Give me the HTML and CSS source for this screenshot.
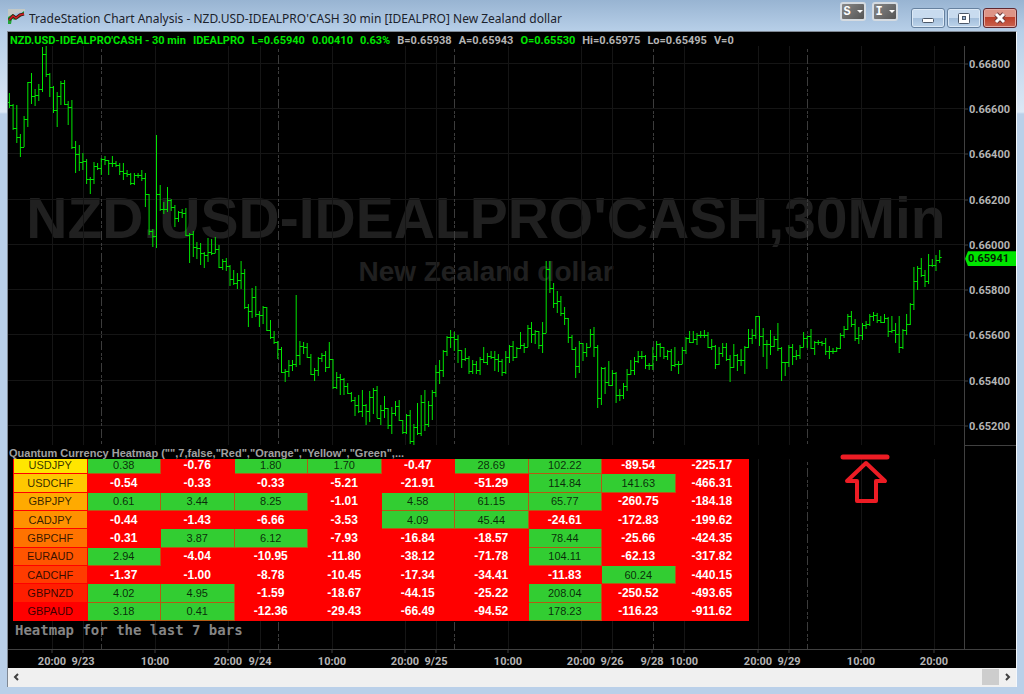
FILE: index.html
```
<!DOCTYPE html>
<html lang="en">
<head>
    <meta charset="UTF-8">
    <meta name="viewport" content="width=device-width, initial-scale=1.0">
    <title>TradeStation Chart Analysis</title>
    <link rel="stylesheet" href="styles.css">
</head>
<body>

<div class="window">
    <header class="titlebar">
        <svg class="app-icon" viewBox="0 0 17 16">
            <path d="M0 0H17V2L6 5L0 9Z" fill="#c3c9c6"/>
            <path d="M0 8L5 5L9 8L16 2V5L11 9L7 11L4 10L3 15H0Z" fill="#22a537"/>
            <path d="M1 11L5 7L8 9L12 6L16 5" fill="none" stroke="#3c1512" stroke-width="3"/>
            <path d="M1 11L5 7L8 9L12 6L16 5" fill="none" stroke="#d02020" stroke-width="1.5"/>
        </svg>
        <h1>TradeStation Chart Analysis - NZD.USD-IDEALPRO'CASH 30 min [IDEALPRO] New Zealand dollar</h1>
        <div class="tool-buttons">
            <button class="tool-button">S<span class="caret"></span></button>
            <button class="tool-button">I<span class="caret"></span></button>
        </div>
        <div class="window-buttons">
            <button class="window-button" aria-label="Minimize">
                <svg viewBox="0 0 32 18"><rect x="10.5" y="9.5" width="11" height="4" rx="1" fill="#fff" stroke="#4b5768"/></svg>
            </button>
            <button class="window-button" aria-label="Maximize">
                <svg viewBox="0 0 32 18"><rect x="10.5" y="4.5" width="11" height="10" rx="1" fill="#fff" stroke="#4b5768"/><rect x="14.5" y="7.5" width="3" height="3" fill="#9ab4d2" stroke="#4b5768"/></svg>
            </button>
            <button class="window-button close" aria-label="Close">
                <svg viewBox="0 0 32 18"><path d="M12 5L20 13M20 5L12 13" stroke="#6b3a3a" stroke-width="5"/><path d="M12 5L20 13M20 5L12 13" stroke="#fff" stroke-width="3"/></svg>
            </button>
        </div>
    </header>

    <main class="client">
        <div class="chart">
            <div class="status">
                <span class="up">NZD.USD-IDEALPRO'CASH - 30 min</span>
                <span class="up">IDEALPRO</span>
                <span class="up">L=0.65940</span>
                <span class="up">0.00410</span>
                <span class="up">0.63%</span>
                <span>B=0.65938</span>
                <span>A=0.65943</span>
                <span class="up">O=0.65530</span>
                <span>Hi=0.65975</span>
                <span>Lo=0.65495</span>
                <span>V=0</span>
            </div>

            <!-- Price pane -->
            <div class="pane price-pane">
                <div class="watermark">
                    <div class="watermark-symbol">NZD.USD-IDEALPRO'CASH,30Min</div>
                    <div class="watermark-name">New Zealand dollar</div>
                </div>
                <svg id="price-plot" class="plot" viewBox="8 46 956 399" preserveAspectRatio="none"></svg>
            </div>
            <div class="price-axis">
                <svg id="price-labels" class="plot"></svg>
                <span id="last-price">0.65941</span>
            </div>

            <!-- Heatmap pane -->
            <div class="indicator-title">Quantum Currency Heatmap ("",7,false,"Red","Orange","Yellow","Green",...</div>
            <div class="axis-divider"></div>
            <div class="pane indicator-pane">
                <svg id="indicator-plot" class="plot" viewBox="8 459 956 190" preserveAspectRatio="none"></svg>
                <div class="heatmap-box">
                    <table class="heatmap">
                        <tbody id="heatmap-rows"></tbody>
                    </table>
                </div>
                <p class="heatmap-note">Heatmap for the last 7 bars</p>
                <svg class="marker" viewBox="0 0 50 52">
                    <path d="M3 3H47" stroke-width="5"/>
                    <path d="M26 9L45 27H36V47H17V27H7Z" stroke-width="4"/>
                </svg>
            </div>
            <div class="price-axis"></div>

            <div class="time-axis">
                <svg id="time-labels" class="plot"></svg>
            </div>
        </div>

        <div class="scrollbar">
            <button aria-label="Scroll left"><svg viewBox="0 0 17 19"><path d="M10 6L7 9L10 12"/></svg></button>
            <div class="track"><div class="thumb"></div></div>
            <button aria-label="Scroll right"><svg viewBox="0 0 17 19"><path d="M7 6L10 9L7 12"/></svg></button>
        </div>
    </main>
</div>

<script src="chart.js"></script>
</body>
</html>
```
FILE: styles.css
```
* {
    box-sizing: border-box;
}

body {
    margin: 0;
    font-family: "Liberation Sans", Arial, sans-serif;
    font-size: 11px;
}

button {
    padding: 0;
    font: inherit;
}

.window {
    display: flex;
    flex-direction: column;
    min-height: 100vh;
    padding: 0 7px 7px;
    background: linear-gradient(#98b4d2 0, #b7cfe8 31px, #dce8f5 112px, #bad0e9 114px);
}

.titlebar {
    display: flex;
    gap: 4px;
    height: 31px;
}

.app-icon {
    width: 17px;
    height: 16px;
    margin: 9px 0 0 1px;
}

.titlebar h1 {
    flex: 1;
    margin: 0;
    padding-top: 3px;
    overflow: hidden;
    white-space: nowrap;
    font: 12px/31px "Noto Sans", sans-serif;
    color: #1b222b;
}

.tool-buttons {
    display: flex;
    gap: 6px;
    margin: 2px 13px 0 0;
}

.tool-button {
    display: flex;
    align-items: center;
    justify-content: center;
    gap: 6px;
    width: 26px;
    height: 19px;
    border: 2px solid #d5dbe1;
    border-radius: 3px;
    background: linear-gradient(135deg, #888, #555);
    font: bold 12px "Liberation Mono", monospace;
    color: #fff;
}

.titlebar .tool-buttons {
    margin-right: 9px;
}

.caret {
    border: 3px solid transparent;
    border-top-color: #fff;
    border-bottom: 0;
}

.window-buttons {
    display: flex;
    gap: 2px;
    margin-top: 8px;
}

.window-button {
    width: 34px;
    height: 20px;
    border: 1px solid #66819f;
    border-radius: 3px;
    background: linear-gradient(#c8dbef 50%, #a3bedb 50%, #bcd3ea);
    box-shadow: inset 0 0 0 1px #dce9f6;
}

.window-button svg {
    display: block;
    width: 100%;
    height: 100%;
}

.window-button.close {
    border-color: #5f2830;
    background: linear-gradient(#dd9486 45%, #bd3e28 45%, #c96350);
    box-shadow: inset 0 0 0 1px #e5aaa2;
}

.client {
    display: flex;
    flex: 1;
    flex-direction: column;
    border: 1px solid #7f8893;
    border-right-color: #f4f7fb;
    border-width: 1px 1px 0;
}

.chart {
    display: grid;
    flex: 1;
    grid-template-columns: 1fr 52px;
    grid-template-rows: 14px 1fr 14px 190px 19px;
    background: #000;
    color: #b4b4b4;
    font-weight: bold;
}

.plot {
    display: block;
    position: absolute;
    inset: 0;
    width: 100%;
    height: 100%;
}

.status {
    display: flex;
    grid-column: 1 / 3;
    gap: 7px;
    padding-left: 2px;
    overflow: hidden;
    white-space: nowrap;
    font-family: Roboto, sans-serif;
    line-height: 17px;
}

.up {
    color: #00e600;
}

.pane {
    position: relative;
    overflow: hidden;
}

.watermark {
    padding-top: 140px;
    text-align: center;
    color: #202020;
}

.watermark-symbol {
    font-size: 57px;
    line-height: 64px;
    white-space: nowrap;
}

.watermark-name {
    font-size: 28px;
    line-height: 44px;
}

.price-axis {
    position: relative;
    border-left: 1px solid #404040;
}

.plot text {
    fill: #b4b4b4;
    font: bold 11px Roboto, sans-serif;
}

#last-price {
    position: absolute;
    left: 0;
    width: 100%;
    height: 15px;
    margin-top: -7px;
    padding-left: 3px;
    background: #00e600;
    clip-path: polygon(0 50%, 3px 0, 100% 0, 100% 100%, 3px 100%);
    font: bold 11px/15px Roboto, sans-serif;
    color: #042004;
}

.indicator-title {
    padding-left: 1px;
    overflow: hidden;
    white-space: nowrap;
    line-height: 17px;
    color: #a0a0a0;
}

.axis-divider {
    border-top: 1px solid #404040;
    border-left: 1px solid #404040;
}

.heatmap-box {
    display: flex;
    position: relative;
    align-items: flex-end;
    width: 77%;
    height: 162px;
    margin-left: 5px;
    overflow: hidden;
}

.heatmap {
    width: 100%;
    height: 166px;
    table-layout: fixed;
    border-collapse: collapse;
    background: #f00;
    font-size: 12px;
    line-height: 12px;
    text-align: center;
    color: #fff;
}

.heatmap th,
.heatmap td {
    padding: 0;
    border: 1px solid #f00;
}

.heatmap th,
.heatmap .gain {
    font-size: 11px;
    font-weight: normal;
    color: rgba(0, 0, 0, 0.8);
}

.heatmap .gain {
    border-color: #b45a14;
    background: #32cd32;
}

.heatmap-note {
    position: relative;
    margin: 0 0 0 7px;
    font: bold 14px/18px "DejaVu Sans Mono", monospace;
    color: #858585;
}

.marker {
    position: absolute;
    top: -5px;
    right: 74px;
    width: 50px;
    height: 52px;
    fill: none;
    stroke: #ed1c24;
    stroke-linecap: round;
    stroke-linejoin: round;
}

.indicator-pane {
    overflow: visible;
}

.time-axis {
    position: relative;
    grid-column: 1 / 3;
    border-top: 1px solid #404040;
}

.scrollbar {
    display: flex;
    height: 19px;
    background: #f0f0f0;
}

.scrollbar button {
    width: 17px;
    border: 0;
    background: none;
}

.scrollbar svg {
    display: block;
    width: 17px;
    height: 19px;
    fill: none;
    stroke: #404040;
    stroke-width: 2;
}

.track {
    display: flex;
    flex: 1;
    justify-content: flex-end;
}

.thumb {
    width: 17px;
    margin: 1px 0 2px;
    background: #cdcdcd;
}
```
FILE: chart.js
```
// high, low, close of each 30 min bar, in plot units
var bars = [
    [93,108,105],[104,130,128],[105,143,137],[134,157,147],[116,147,119],[82,127,82],[73,104,96],[89,106,95],
    [84,101,89],[47,92,54],[46,77,74],[73,97,87],[86,113,110],[92,127,96],[81,105,83],[80,105,104],
    [101,125,107],[100,149,147],[141,173,154],[145,171,162],[153,170,161],[159,184,179],[177,194,179],[162,184,166],
    [163,170,168],[158,175,159],[156,165,160],[160,175,163],[156,167,163],[161,167,165],[163,175,171],[163,180,173],
    [170,177,174],[173,185,183],[173,185,175],[173,178,175],[170,181,178],[173,207,194],[194,235,231],[229,247,236],
    [135,248,194],[185,211,209],[202,214,209],[187,212,200],[199,211,207],[205,227,218],[211,222,212],[209,218,213],
    [208,236,235],[233,263,234],[231,257,247],[242,259,248],[243,265,253],[252,268,255],[238,262,252],[239,255,253],
    [237,253,249],[245,268,267],[259,270,261],[258,271,266],[265,286,279],[270,285,283],[273,289,280],[261,289,273],
    [269,309,307],[304,327,311],[288,318,297],[286,317,314],[311,327,315],[306,324,307],[307,331,330],[320,339,337],
    [331,344,342],[341,359,349],[347,373,372],[369,382,371],[360,377,365],[360,371,364],[295,367,355],[341,365,346],
    [342,354,347],[343,358,357],[354,375,374],[368,381,370],[357,376,358],[353,362,355],[351,372,367],[342,368,359],
    [359,389,387],[372,389,377],[374,395,379],[378,395,386],[383,394,393],[392,402,400],[397,416,405],[395,413,411],
    [390,417,405],[404,425,411],[391,422,397],[388,414,390],[386,418,418],[405,425,410],[396,418,408],[408,429,425],
    [407,434,413],[401,416,406],[400,421,420],[420,434,432],[414,434,415],[410,444,441],[424,445,427],[403,435,433],
    [395,436,402],[390,431,424],[401,427,405],[390,420,392],[365,397,372],[360,384,370],[350,377,351],[336,356,337],
    [330,348,337],[332,351,339],[335,363,350],[350,368,359],[348,361,358],[356,374,371],[360,374,364],[361,374,370],
    [357,375,359],[347,363,362],[353,365,356],[351,359,357],[351,371,359],[354,372,361],[359,376,372],[351,374,357],
    [345,363,346],[341,361,357],[347,358,348],[332,349,345],[343,353,347],[325,347,328],[322,343,334],[330,344,331],
    [331,349,345],[322,353,333],[261,333,269],[261,293,288],[283,308,303],[291,313,301],[296,316,313],[307,325,318],
    [318,343,337],[335,350,349],[347,378,366],[341,373,343],[343,361,352],[343,357,347],[329,347,334],[327,357,347],
    [345,408,398],[367,405,368],[367,394,382],[361,386,385],[370,386,373],[372,403,395],[389,401,395],[383,399,386],
    [369,391,374],[360,375,370],[357,375,361],[351,363,356],[351,359,356],[355,369,365],[363,370,365],[347,370,356],
    [341,361,344],[343,357,347],[347,359,356],[350,360,351],[349,371,365],[347,367,364],[361,374,364],[347,364,350],
    [337,354,338],[331,343,342],[331,343,339],[333,345,335],[331,338,335],[330,338,335],[332,348,347],[339,350,346],
    [345,369,364],[347,365,353],[343,357,347],[343,361,359],[355,382,367],[344,368,355],[354,371,360],[349,366,360],
    [346,374,347],[329,348,338],[329,344,335],[316,339,316],[316,346,336],[328,357,344],[340,369,344],[330,355,346],
    [336,347,339],[323,351,348],[347,381,362],[362,376,362],[345,367,347],[344,365,356],[350,360,355],[345,359,347],
    [332,347,338],[336,348,336],[329,349,348],[341,355,342],[340,345,342],[341,346,343],[338,355,351],[346,359,351],
    [348,354,351],[347,352,348],[333,349,335],[326,338,329],[314,330,316],[311,327,324],[319,341,338],[327,344,335],
    [323,340,325],[321,329,324],[314,326,316],[312,321,315],[313,323,320],[316,323,322],[314,323,318],[317,337,331],
    [316,333,330],[323,343,334],[316,353,347],[329,349,330],[314,335,324],[303,325,304],[267,310,281],[266,290,268],
    [258,277,275],[270,287,281],[254,284,265],[259,267,265],[255,271,260],[250,263,257]
];

var times = [
    [52, '20:00'], [83, '9/23'], [155, '10:00'], [228, '20:00'], [260, '9/24'], [332, '10:00'],
    [405, '20:00'], [436, '9/25'], [508, '10:00'], [581, '20:00'], [612, '9/26'], [652, '9/28'],
    [684, '10:00'], [758, '20:00'], [789, '9/29'], [861, '10:00'], [934, '20:00']
];
var sessions = [101, 278, 454, 653, 807];

var pairs = [
    ['USDJPY', '#ffe600', '0.38 -0.76 1.80 1.70 -0.47 28.69 102.22 -89.54 -225.17'],
    ['USDCHF', '#ffc800', '-0.54 -0.33 -0.33 -5.21 -21.91 -51.29 114.84 141.63 -466.31'],
    ['GBPJPY', '#ffaa00', '0.61 3.44 8.25 -1.01 4.58 61.15 65.77 -260.75 -184.18'],
    ['CADJPY', '#ff9100', '-0.44 -1.43 -6.66 -3.53 4.09 45.44 -24.61 -172.83 -199.62'],
    ['GBPCHF', '#ff7300', '-0.31 3.87 6.12 -7.93 -16.84 -18.57 78.44 -25.66 -424.35'],
    ['EURAUD', '#ff5500', '2.94 -4.04 -10.95 -11.80 -38.12 -71.78 104.11 -62.13 -317.82'],
    ['CADCHF', '#ff3c00', '-1.37 -1.00 -8.78 -10.45 -17.34 -34.41 -11.83 60.24 -440.15'],
    ['GBPNZD', '#ff1e00', '4.02 4.95 -1.59 -18.67 -44.15 -25.22 208.04 -250.52 -493.65'],
    ['GBPAUD', '#ff0000', '3.18 0.41 -12.36 -29.43 -66.49 -94.52 178.23 -116.23 -911.62']
];

function priceY(price) {
    return 64 + (0.668 - price) * 22620;
}

function path(d, stroke, extra) {
    return '<path d="' + d + '" fill="none" stroke="' + stroke + '" ' + (extra || '') + '/>';
}

function verticals(top, bottom) {
    var grid = '';
    var dashed = '';
    times.forEach(function (t) {
        if (t[1] !== '9/28') grid += 'M' + (t[0] + 0.5) + ' ' + top + 'V' + bottom;
    });
    sessions.forEach(function (x) {
        dashed += 'M' + (x + 0.5) + ' ' + (top + 3) + 'V' + bottom;
    });
    return path(grid, '#151515') + path(dashed, '#3c3c3c', 'stroke-dasharray="3 3 9 3 3 1"');
}

function drawPrices() {
    var grid = '';
    var labels = '';
    for (var i = 0; i < 9; i++) {
        var price = 0.668 - i * 0.002;
        var y = Math.round(priceY(price));
        var percent = (y - 46) / 399 * 100;
        grid += 'M8 ' + (y - 0.5) + 'H964';
        labels += '<text x="4" y="' + percent + '%" dy="4">' + price.toFixed(5) + '</text>';
        labels += '<line x1="0" x2="3" y1="' + percent + '%" y2="' + percent + '%" stroke="#404040"/>';
    }

    var ohlc = '';
    bars.forEach(function (bar, i) {
        var x = 9.4 + i * 3.677;
        var open = i ? bars[i - 1][2] : 102;
        open = Math.max(bar[0], Math.min(bar[1], open));
        ohlc += 'M' + x.toFixed(1) + ' ' + bar[0] + 'V' + bar[1];
        ohlc += 'M' + (x - 2).toFixed(1) + ' ' + (open + 0.5) + 'h2';
        ohlc += 'M' + x.toFixed(1) + ' ' + (bar[2] + 0.5) + 'h2';
    });

    document.getElementById('price-plot').innerHTML =
        path(grid, '#151515') + verticals(46, 445) + path(ohlc, '#00e600');
    document.getElementById('price-labels').innerHTML = labels;
    document.getElementById('last-price').style.top = (priceY(0.65941) - 46) / 399 * 100 + '%';
}

function drawTimes() {
    // the time axis also runs under the price axis, so its width is 1008 units
    document.getElementById('time-labels').innerHTML = times.map(function (t) {
        var x = (t[0] - 8) / 1008 * 100 + '%';
        return '<line x1="' + x + '" x2="' + x + '" y1="0" y2="3" stroke="#404040"/>' +
            '<text x="' + x + '" y="15" text-anchor="middle">' + t[1] + '</text>';
    }).join('');
}

function drawHeatmap() {
    document.getElementById('heatmap-rows').innerHTML = pairs.map(function (pair) {
        var cells = pair[2].split(' ').map(function (value) {
            return '<td' + (value > 0 ? ' class="gain"' : '') + '>' + value + '</td>';
        }).join('');
        return '<tr><th scope="row" style="background:' + pair[1] + '">' + pair[0] + '</th>' + cells + '</tr>';
    }).join('');
}

drawPrices();
document.getElementById('indicator-plot').innerHTML = verticals(459, 649);
drawTimes();
drawHeatmap();
```
